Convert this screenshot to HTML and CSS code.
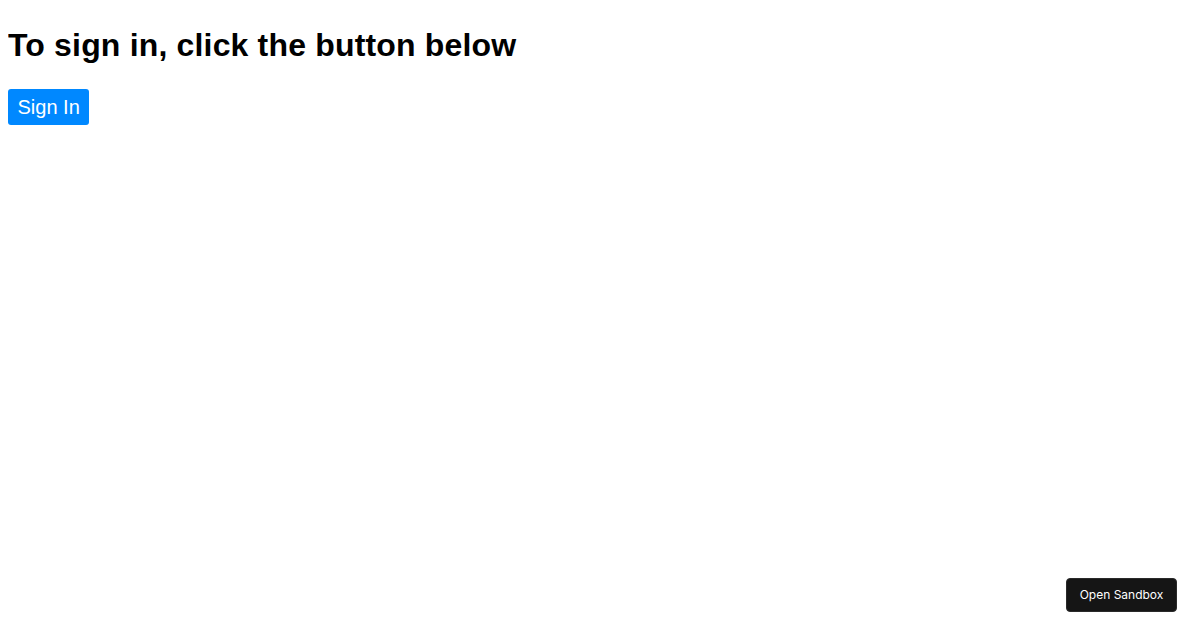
FILE: index.html
```html
<!DOCTYPE html>
<html>
<head>
<meta charset="utf-8">
<link rel="stylesheet" href="styles.css">
</head>
<body>
<h1 class="title">To sign in, click the button below</h1>
<div class="actions"><button class="signin">Sign In</button></div>
<a class="sandbox">Open Sandbox</a>
</body>
</html>
```
FILE: styles.css
```css
html, body { background: #fff; }
body {
  margin: 8px;
  font-family: "Liberation Sans", Arial, sans-serif;
}
.title {
  font-size: 32px;
  font-weight: bold;
  letter-spacing: 0.17px;
  margin: 18.5px 0 25.5px;
  color: #000;
}
.actions { margin: 0; }
.signin {
  font-family: "Liberation Sans", Arial, sans-serif;
  font-size: 20px;
  background: #0088ff;
  color: #fff;
  border: none;
  border-radius: 3px;
  padding: 6px 9.5px;
  height: 36px;
  line-height: 24px;
}
.sandbox {
  position: fixed;
  right: 23px;
  bottom: 18px;
  width: 111px;
  height: 34px;
  box-sizing: border-box;
  display: flex;
  align-items: center;
  justify-content: center;
  padding-bottom: 1px;
  background: #151515;
  color: #fff;
  border-radius: 4px;
  font-family: Inter, "Liberation Sans", sans-serif;
  font-size: 12px;
  border: 1px solid #2a2a2a;
}
```
